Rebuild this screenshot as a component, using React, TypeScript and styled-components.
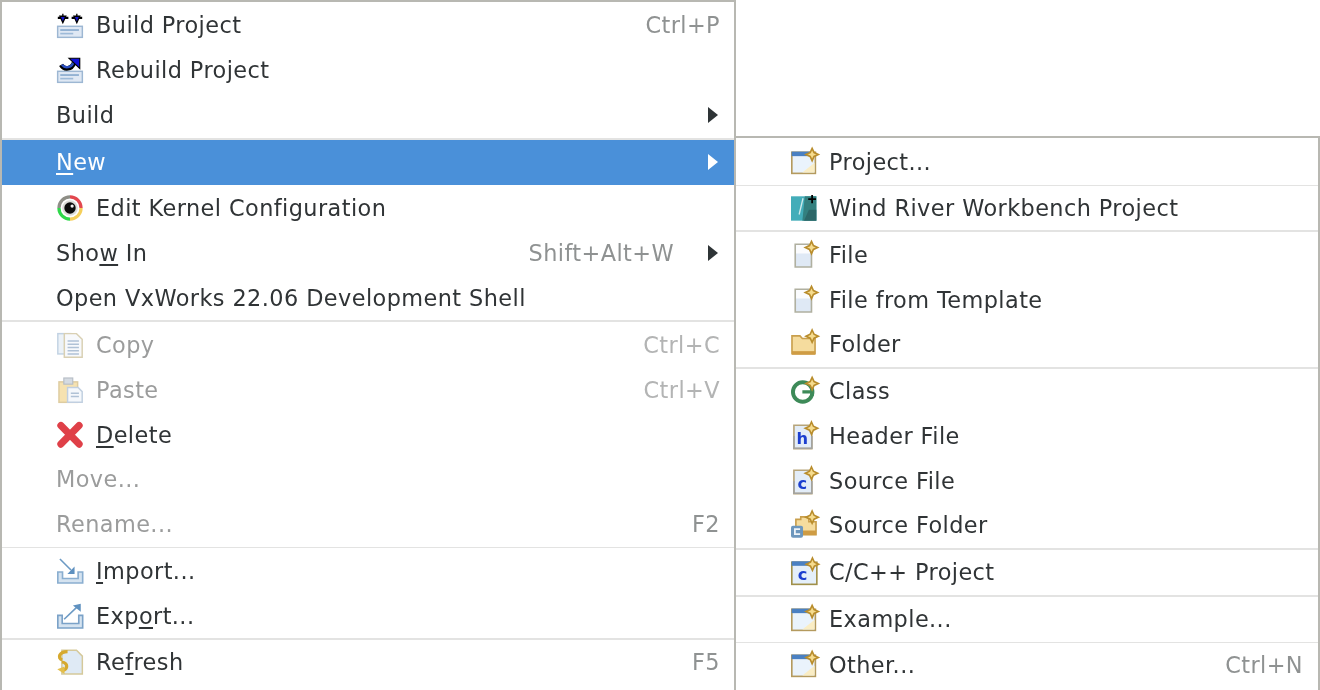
import React from "react"
import styled, { createGlobalStyle } from "styled-components"

const GlobalStyle = createGlobalStyle`
    html, body {
        margin : 0;
        padding : 0;
        background : #ffffff;
        overflow : hidden;
    }
`

// gold "new" sparkle used on most of the wizard icons
const Spark = ({ x = 12.4, y = 3.4 }: { x?: number; y?: number }) => (
    <g transform={`translate(${x} ${y})`}>
        <path d="M0 -3.8 L1.2 -1.2 L3.8 0 L1.2 1.2 L0 3.8 L-1.2 1.2 L-3.8 0 L-1.2 -1.2 Z" fill="#f6dc8e" stroke="#b98d2c" strokeWidth="1" />
    </g>
)

const Svg = ({ children, $o = 1 }: { children: React.ReactNode; $o?: number }) => (
    <svg width="26" height="26" viewBox="0 0 16 16" style={{ opacity: $o, overflow: "visible" }}>{children}</svg>
)

const Tray = () => (
    <g>
        <rect x="0.4" y="8.8" width="15.2" height="6.8" fill="#dfe8f4" stroke="#9db7d3" strokeWidth="0.9" />
        <rect x="2" y="10.6" width="11.5" height="1" fill="#86a9cd" />
        <rect x="2" y="12.8" width="8" height="1" fill="#9dbad8" />
    </g>
)

const BuildIcon = () => (
    <Svg>
        <Tray />
        <path d="M0.5 3.6 H7 M9 3.6 H15.5" stroke="#000" strokeWidth="1.4" />
        <path d="M3.6 1 V2.6 H1.8 L3.6 6.6 L5.4 2.6 H3.6" fill="#1515d0" stroke="#000" strokeWidth="0.8" />
        <path d="M12.2 1 V2.6 H10.4 L12.2 6.6 L14 2.6 H12.2" fill="#1515d0" stroke="#000" strokeWidth="0.8" />
    </Svg>
)

const RebuildIcon = () => (
    <Svg>
        <Tray />
        <path d="M2.5 4.8 C4.5 8.2 9 7.6 10.5 3.6" fill="none" stroke="#000" strokeWidth="2.8" />
        <path d="M3 4.8 C5 7.2 8.8 6.6 10 3.6" fill="none" stroke="#2b4fc0" strokeWidth="1.5" />
        <path d="M7.4 0.8 H14 V7 Z" fill="#1212d8" stroke="#000" strokeWidth="0.7" />
    </Svg>
)

const KernelIcon = () => (
    <Svg>
        <path d="M1.2 8 A6.8 6.8 0 0 1 8 1.2" fill="none" stroke="#8e8e86" strokeWidth="2" />
        <path d="M8 1.2 A6.8 6.8 0 0 1 14.8 8" fill="none" stroke="#e2474e" strokeWidth="2" />
        <path d="M14.8 8 A6.8 6.8 0 0 1 8 14.8" fill="none" stroke="#f5cf5a" strokeWidth="2" />
        <path d="M8 14.8 A6.8 6.8 0 0 1 1.2 8" fill="none" stroke="#2fd84a" strokeWidth="2" />
        <circle cx="8" cy="8" r="4.8" fill="#dcdcd8" />
        <circle cx="8" cy="8" r="3.5" fill="#0c0c0c" />
        <circle cx="9.3" cy="6.8" r="1" fill="#f2f2f2" />
    </Svg>
)

const CopyIcon = () => (
    <Svg $o={0.7}>
        <rect x="0.5" y="1" width="8" height="12.5" fill="#e4edf6" stroke="#a9c0d8" strokeWidth="0.9" />
        <path d="M4.5 1 H12 L15.5 4.5 V15.5 H4.5 Z" fill="#f5f7fb" stroke="#c9bd94" strokeWidth="0.9" />
        <path d="M6.5 5.5 H13.5 M6.5 7.5 H13.5 M6.5 9.5 H13.5 M6.5 11.5 H13.5 M6.5 13.5 H13.5" stroke="#8fa9c6" strokeWidth="0.9" />
    </Svg>
)

const PasteIcon = () => (
    <Svg $o={0.7}>
        <rect x="1.2" y="3" width="11.5" height="12.6" fill="#f3d68f" stroke="#d0b77a" strokeWidth="0.9" />
        <rect x="4.2" y="0.6" width="5.5" height="3.8" fill="#c4ccd6" stroke="#98a2ae" strokeWidth="0.7" />
        <path d="M6.5 6.5 H13 L15.5 9 V15.6 H6.5 Z" fill="#f2f6fb" stroke="#a7bcd3" strokeWidth="0.9" />
        <path d="M8.5 10 H13.5 M8.5 12 H13.5" stroke="#8fa9c6" strokeWidth="0.9" />
    </Svg>
)

const DeleteIcon = () => (
    <Svg>
        <path d="M2.4 2.2 L13.6 13.6 M13.6 2.2 L2.4 13.6" stroke="#df4048" strokeWidth="4.4" strokeLinecap="round" />
    </Svg>
)

const ImportIcon = () => (
    <Svg>
        <path d="M0.5 8.6 V15.4 H15.8 V8.6 H13 V12.6 H3.4 V8.6 Z" fill="#d5e3f0" stroke="#8aaed0" strokeWidth="1" />
        <path d="M1.8 0.6 L8.6 7.4" stroke="#6c9ac4" strokeWidth="1" />
        <path d="M10.8 9.8 H6.4 L10.8 5.2 Z" fill="#5f91c0" />
    </Svg>
)

const ExportIcon = () => (
    <Svg>
        <path d="M0.5 7.6 V15.4 H15.8 V7.6 H13.4 V12.6 H3.2 V7.6 Z" fill="#d5e3f0" stroke="#7ba2c8" strokeWidth="1" />
        <path d="M4.4 10 L12.4 2.4" stroke="#6c9ac4" strokeWidth="1" />
        <path d="M14.6 0.4 V5.4 L9.8 1.6 Z" fill="#5f91c0" />
    </Svg>
)

const RefreshIcon = () => (
    <Svg>
        <path d="M3 0.8 H12 L15.6 4.4 V15.4 H3 Z" fill="#dfeaf5" stroke="#d5c99a" strokeWidth="0.9" />
        <path d="M6.5 1.6 C1.4 1.6 0 5.4 3.2 6.8 M3 8 C6.8 8.6 7 12.4 3.2 13.4" fill="none" stroke="#d6a92e" strokeWidth="2" />
        <path d="M0.2 12.4 L4.6 10.8 L4.6 15.4 Z" fill="#e4bf4c" />
    </Svg>
)

const ProjectIcon = () => (
    <Svg>
        <rect x="0.5" y="2" width="14.5" height="13" fill="#eaf3fc" stroke="#b49a5e" strokeWidth="1" />
        <rect x="0.4" y="1.6" width="12" height="2.8" fill="#4a80c2" />
        <path d="M7 14.5 L14.5 8.5 V14.5 Z" fill="#faedc4" />
        <Spark x={13} y={3.4} />
    </Svg>
)

const WindRiverIcon = () => (
    <Svg>
        <rect x="0" y="0.8" width="15.6" height="15" fill="#43adb9" />
        <path d="M8.5 0.8 H15.6 V15.8 H7 Z" fill="#33807f" />
        <path d="M5 12 L7.4 2" stroke="#cfeaea" strokeWidth="0.8" />
        <path d="M11 9 H15.6 V15.8 H8 Z" fill="#2b5f60" opacity="0.75" />
        <path d="M13 0 V5 M10.6 2.5 H15.4" stroke="#000" strokeWidth="1.1" />
    </Svg>
)

const FileIcon = () => (
    <Svg>
        <path d="M2.6 1.4 H12.6 V15.4 H2.6 Z" fill="#dfe9f5" stroke="#b0b0a0" strokeWidth="1" />
        <path d="M3.1 1.9 H10 L12.1 7 H3.1 Z" fill="#fbfcfe" />
        <Spark x={12.6} y={3.4} />
    </Svg>
)

const FolderIcon = () => (
    <Svg>
        <path d="M0.6 3 H5.5 L7 4.6 H14.8 V14 H0.6 Z" fill="#f5dc9e" stroke="#c99f4c" strokeWidth="1" />
        <path d="M0.6 12.4 H14.8 V14.6 H0.6 Z" fill="#cf9c44" />
        <Spark x={13} y={3.2} />
    </Svg>
)

const ClassIcon = () => (
    <Svg>
        <circle cx="7.2" cy="8.6" r="6" fill="none" stroke="#3d8a58" strokeWidth="2.4" />
        <path d="M7 8.6 H13 V11" fill="none" stroke="#3d8a58" strokeWidth="2" />
        <Spark x={13} y={3.4} />
    </Svg>
)

const LetterFile = ({ letter }: { letter: string }) => (
    <Svg>
        <path d="M1.8 1.4 H12.8 V15.8 H1.8 Z" fill="#e3edf8" stroke="#b7a57a" strokeWidth="1" />
        <path d="M1.3 15.5 H13.3 M1.8 8 V15.5 M12.8 8 V15.5" stroke="#a3a3a0" strokeWidth="1" />
        <CodeLetter x="7.2" y="13.2" textAnchor="middle">{letter}</CodeLetter>
        <Spark x={12.6} y={3.2} />
    </Svg>
)

const SourceFolderIcon = () => (
    <Svg>
        <path d="M3 4.5 H6 V3 H11 V6 H15.4 V14 H3 Z" fill="#f5dc9e" stroke="#c99f4c" strokeWidth="1" />
        <rect x="3" y="11.4" width="12.4" height="2.8" fill="#cf9c44" />
        <rect x="0" y="8.4" width="7.4" height="7.4" rx="1.2" fill="#6d97bd" />
        <path d="M5.6 10.6 H2.4 V13.6 H5.6" fill="none" stroke="#eef3f8" strokeWidth="1.1" />
        <Spark x={13} y={3.2} />
    </Svg>
)

const CppProjectIcon = () => (
    <Svg>
        <rect x="0.5" y="2" width="15.4" height="13.6" fill="#e4effa" stroke="#a0904a" strokeWidth="1" />
        <rect x="0.4" y="1.4" width="12" height="2.8" fill="#4a80c2" />
        <CodeLetter x="7.4" y="13.2" textAnchor="middle">c</CodeLetter>
        <Spark x={13.2} y={3.2} />
    </Svg>
)

const CodeLetter = styled.text`
    font-family : "DejaVu Sans", sans-serif;
    font-size : 10px;
    font-weight : 700;
    fill : #1c3fcf;
`

const Canvas = styled.div`
    position : relative;
    width : 1320px;
    height : 690px;
    overflow : hidden;
    background : #ffffff;
    font-family : "DejaVu Sans", sans-serif;
    font-size : 22.4px;
    letter-spacing : 0.42px;
    color : #303436;
    filter : blur(0.35px);
`

const MainMenu = styled.div`
    box-sizing : border-box;
    width : 736px;
    height : 720px;
    padding-top : 0.8px;
    border-top : 2px solid #b8b8b2;
    border-left : 2px solid #b8b8b2;
    border-right : 2px solid #b8b8b2;
    background : #ffffff;
`

// the cascade, lying over the right edge of the main menu
const SubMenu = styled.div`
    box-sizing : border-box;
    position : absolute;
    left : 734px;
    top : 136px;
    width : 586px;
    height : 580px;
    padding-top : 1.8px;
    border-top : 2px solid #b8b8b2;
    border-left : 2px solid #b8b8b2;
    border-right : 2px solid #b8b8b2;
    background : #ffffff;
`

const Row = styled.div<{ $active?: boolean; $disabled?: boolean; $sub?: boolean; $low?: boolean }>`
    box-sizing : border-box;
    display : flex;
    align-items : center;
    height : ${p => (p.$sub ? "44.75px" : "45px")};
    padding-top : ${p => (p.$low ? "2px" : "0")};
    padding-left : 54px;
    padding-right : ${p => (p.$sub ? "15px" : "14px")};
    white-space : nowrap;
    background : ${p => (p.$active ? "#4a90d9" : "transparent")};
    color : ${p => (p.$active ? "#ffffff" : p.$disabled ? "#9b9c9c" : "#303436")};
`

const IconSlot = styled.span<{ $sub?: boolean }>`
    flex : none;
    display : flex;
    align-items : center;
    width : ${p => (p.$sub ? "39px" : "40px")};
    margin-left : 1px;
    margin-right : -1px;
`

const Label = styled.span`
    flex : 1;
`

const Mnemonic = styled.span`
    text-decoration : underline;
    text-decoration-thickness : 2px;
    text-underline-offset : 3px;
`

const Shortcut = styled.span<{ $muted?: boolean }>`
    color : ${p => (p.$muted ? "#b3b4b4" : "#8f9292")};
`

const ArrowSlot = styled.span`
    flex : none;
    display : flex;
    justify-content : flex-end;
    width : 46px;
`

const Arrow = styled.span<{ $active?: boolean }>`
    width : 0;
    height : 0;
    margin-right : 2px;
    border-top : 8px solid transparent;
    border-bottom : 8px solid transparent;
    border-left : 10px solid ${p => (p.$active ? "#ffffff" : "#2e3436")};
`

const Sep = styled.div<{ $h: number; $line: number }>`
    box-sizing : border-box;
    height : ${p => p.$h}px;
    display : flex;
    align-items : flex-end;
    &::after {
        content : "";
        flex : 1;
        height : ${p => p.$line}px;
        background : #e3e3e2;
    }
`

type Item = {
    label?: React.ReactNode
    icon?: React.ReactNode
    shortcut?: string
    arrow?: boolean
    active?: boolean
    disabled?: boolean
    low?: boolean
    h?: number
    line?: number
}

const mainItems: Item[] = [
    { label: "Build Project", icon: <BuildIcon />, shortcut: "Ctrl+P" },
    { label: "Rebuild Project", icon: <RebuildIcon /> },
    { label: "Build", arrow: true },
    { h: 2.2, line: 2 },
    { label: <><Mnemonic>N</Mnemonic>ew</>, arrow: true, active: true },
    { label: "Edit Kernel Configuration", icon: <KernelIcon />, low: true },
    { label: <>Sho<Mnemonic>w</Mnemonic> In</>, shortcut: "Shift+Alt+W", arrow: true, low: true },
    { label: "Open VxWorks 22.06 Development Shell", low: true },
    { h: 2, line: 2 },
    { label: "Copy", icon: <CopyIcon />, shortcut: "Ctrl+C", disabled: true, low: true },
    { label: "Paste", icon: <PasteIcon />, shortcut: "Ctrl+V", disabled: true, low: true },
    { label: <><Mnemonic>D</Mnemonic>elete</>, icon: <DeleteIcon />, low: true },
    { label: "Move...", disabled: true },
    { label: "Rename...", shortcut: "F2", disabled: true },
    { h: 1, line: 1 },
    { label: <><Mnemonic>I</Mnemonic>mport...</>, icon: <ImportIcon />, low: true },
    { label: <>Exp<Mnemonic>o</Mnemonic>rt...</>, icon: <ExportIcon />, low: true },
    { h: 2, line: 2 },
    { label: <>Re<Mnemonic>f</Mnemonic>resh</>, icon: <RefreshIcon />, shortcut: "F5" },
]

const subItems: Item[] = [
    { label: "Project...", icon: <ProjectIcon /> },
    { h: 1.05, line: 1 },
    { label: "Wind River Workbench Project", icon: <WindRiverIcon /> },
    { h: 2.15, line: 2 },
    { label: "File", icon: <FileIcon /> },
    { label: "File from Template", icon: <FileIcon /> },
    { label: "Folder", icon: <FolderIcon /> },
    { h: 2.05, line: 2 },
    { label: "Class", icon: <ClassIcon /> },
    { label: "Header File", icon: <LetterFile letter="h" /> },
    { label: "Source File", icon: <LetterFile letter="c" /> },
    { label: "Source Folder", icon: <SourceFolderIcon /> },
    { h: 2.3, line: 2 },
    { label: "C/C++ Project", icon: <CppProjectIcon /> },
    { h: 1.75, line: 2 },
    { label: "Example...", icon: <ProjectIcon /> },
    { h: 1.25, line: 1 },
    { label: "Other...", icon: <ProjectIcon />, shortcut: "Ctrl+N" },
]

function MenuRows({ items, sub }: { items: Item[]; sub?: boolean }) {
    return (
        <>
            {items.map((item, idx) => {
                if (item.h) return <Sep key={idx} $h={item.h} $line={item.line ?? 1} />
                return (
                    <Row key={idx} $active={item.active} $disabled={item.disabled} $sub={sub} $low={item.low}>
                        {item.icon && <IconSlot $sub={sub}>{item.icon}</IconSlot>}
                        <Label>{item.label}</Label>
                        {item.shortcut && <Shortcut $muted={item.disabled && item.shortcut !== "F2"}>{item.shortcut}</Shortcut>}
                        {item.arrow && <ArrowSlot><Arrow $active={item.active} /></ArrowSlot>}
                    </Row>
                )
            })}
        </>
    )
}

export default function App() {
    return (
        <Canvas>
            <GlobalStyle />
            <MainMenu>
                <MenuRows items={mainItems} />
            </MainMenu>
            <SubMenu>
                <MenuRows items={subItems} sub />
            </SubMenu>
        </Canvas>
    )
}
